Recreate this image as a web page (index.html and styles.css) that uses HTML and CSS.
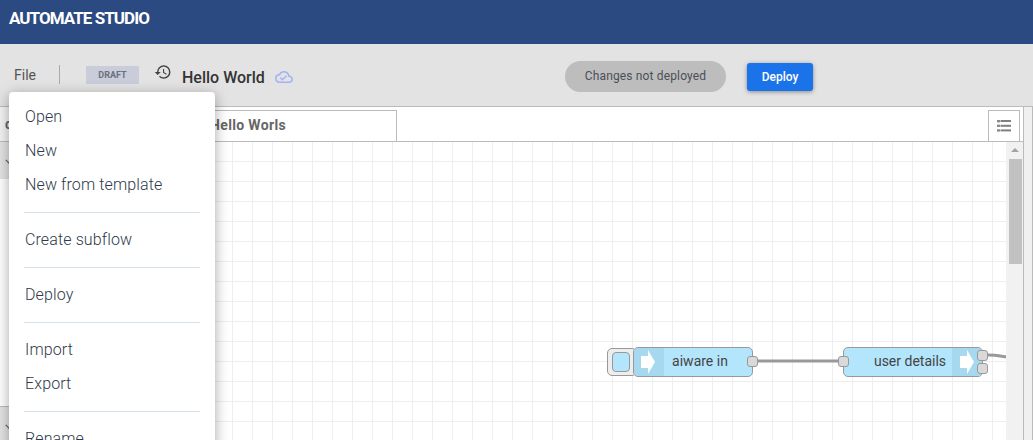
FILE: index.html
```html
<!DOCTYPE html>
<html lang="en">
<head>
<meta charset="utf-8">
<title>Automate Studio</title>
<link rel="stylesheet" href="styles.css">
</head>
<body>
<div class="app">
  <header class="topbar">AUTOMATE STUDIO</header>
  <div class="toolbar">
    <span class="file">File</span>
    <span class="sep"></span>
    <span class="draft">DRAFT</span>
    <svg class="history" viewBox="0 0 24 24"><path d="M13 3a9 9 0 0 0-9 9H1l3.89 3.89.07.14L9 12H6c0-3.87 3.13-7 7-7s7 3.13 7 7-3.13 7-7 7c-1.93 0-3.68-.79-4.94-2.06l-1.42 1.42A8.954 8.954 0 0 0 13 21a9 9 0 0 0 0-18zm-1 5v5l4.28 2.54.72-1.21-3.5-2.08V8H12z"/></svg>
    <span class="flowname">Hello World</span>
    <svg class="cloud" viewBox="0 0 24 24"><path d="M19.35 10.04A7.49 7.49 0 0 0 12 4C9.11 4 6.6 5.64 5.35 8.04A5.994 5.994 0 0 0 0 14c0 3.31 2.69 6 6 6h13c2.76 0 5-2.24 5-5 0-2.64-2.05-4.78-4.65-4.96zM19 18H6c-2.21 0-4-1.79-4-4 0-2.05 1.53-3.76 3.56-3.97l1.07-.11.5-.95A5.469 5.469 0 0 1 12 6c2.62 0 4.88 1.86 5.39 4.43l.3 1.5 1.53.11A2.98 2.98 0 0 1 22 15c0 1.65-1.35 3-3 3zm-9-3.82l-2.09-2.09L6.5 13.5 10 17l6.01-6.01-1.41-1.41z"/></svg>
    <span class="status">Changes not deployed</span>
    <button class="deploy">Deploy</button>
  </div>
  <main class="main">
    <aside class="palette">
      <div class="palette-search">c</div>
      <div class="palette-head"><svg class="chev" viewBox="0 0 10 6"><path d="M1 1l4 4 4-4"/></svg></div>
      <div class="palette-body"></div>
      <div class="palette-foot"><svg class="chev" viewBox="0 0 10 6"><path d="M1 1l4 4 4-4"/></svg></div>
    </aside>
    <section class="workspace">
      <div class="tabbar">
        <div class="tab">Hello Worls</div>
        <button class="tabmenu">
          <svg viewBox="0 0 14 12"><g class="dots"><rect x="0" y="0" width="3" height="2.4"/><rect x="0" y="4.6" width="3" height="2.4"/><rect x="0" y="9.2" width="3" height="2.4"/></g><rect x="3.5" y="0" width="10.5" height="2"/><rect x="3.5" y="4.8" width="10.5" height="2"/><rect x="3.5" y="9.4" width="10.5" height="2"/></svg>
        </button>
      </div>
      <div class="canvas-row">
        <div class="canvas">
          <svg class="wires" width="802" height="298">
            <path d="M553 219H638"/>
            <path d="M783 213C790 213 795 214 802 215"/>
          </svg>
          <div class="inject"><span class="inject-btn"></span></div>
          <div class="node node-in">
            <span class="node-icon"><svg viewBox="0 0 14 24"><path d="M0 6h7V0l7 12-7 12v-6H0z"/></svg></span>
            <span class="node-label">aiware in</span>
            <span class="port port-out"></span>
          </div>
          <div class="node node-user">
            <span class="port port-in"></span>
            <span class="node-label">user details</span>
            <span class="node-icon"><svg viewBox="0 0 14 24"><path d="M0 6h7V0l7 12-7 12v-6H0z"/></svg></span>
            <span class="port port-o1"></span>
            <span class="port port-o2"></span>
          </div>
        </div>
        <div class="scrollbar">
          <span class="scroll-up"></span>
          <span class="scroll-thumb"></span>
        </div>
      </div>
    </section>
    <div class="gutter"></div>
  </main>
  <nav class="menu">
    <a>Open</a>
    <a>New</a>
    <a>New from template</a>
    <hr>
    <a>Create subflow</a>
    <hr>
    <a>Deploy</a>
    <hr>
    <a>Import</a>
    <a>Export</a>
    <hr>
    <a>Rename</a>
  </nav>
</div>
</body>
</html>
```

FILE: styles.css
```css
* { box-sizing: border-box; }
html, body { margin: 0; padding: 0; }
body { font-family: Roboto, "Liberation Sans", sans-serif; background: #e3e3e3; }
.app { position: relative; width: 1033px; height: 440px; overflow: hidden; display: flex; flex-direction: column; }

.topbar { height: 44px; flex: none; background: #2c4a82; color: #fff; font-size: 17px; font-weight: 700; line-height: 36px; padding-left: 9px; letter-spacing: -0.95px; }

.toolbar { height: 62px; flex: none; background: #e3e3e3; display: flex; align-items: center; padding-left: 14px; }
.file { font-size: 14px; color: #555; width: 45px; margin-top: -1px; }
.sep { width: 1px; height: 19px; background: #aaa; margin-right: 26px; margin-top: -1px; }
.draft { width: 53px; height: 18px; background: #c9cdd9; color: #6a7080; font-size: 9px; font-weight: 700; text-align: center; line-height: 18px; margin-right: 15px; margin-top: -1px; }
.history { width: 18px; height: 18px; fill: #444; margin-right: 10px; margin-top: -7px; flex: none; }
.flowname { font-size: 16px; font-weight: 500; color: #333; width: 93px; margin-top: 4px; }
.cloud { width: 18px; height: 18px; fill: #a3b1f5; flex: none; margin-right: 272px; margin-top: 4px; }
.status { width: 161px; height: 31px; border-radius: 16px; background: #bdbdbd; color: #4a4f57; font-size: 12px; letter-spacing: .15px; text-align: center; line-height: 30px; margin-right: 21px; margin-top: 3px; }
.deploy { width: 66px; height: 28px; border: 0; border-radius: 3px; background: #1a73e8; color: #fff; font: 500 12px Roboto, sans-serif; box-shadow: 0 1px 4px rgba(0,0,0,.4); padding: 0; margin-top: 4px; }

.main { flex: 1; min-height: 0; display: flex; border-top: 1px solid #bbb; }
.palette { width: 205px; flex: none; display: flex; flex-direction: column; background: #f3f3f3; }
.palette-search { height: 35px; flex: none; border-bottom: 1px solid #bbb; padding-left: 5px; font-size: 14px; font-weight: 700; color: #666; line-height: 34px; }
.palette-head { height: 37px; flex: none; background: #e3e3e3; padding: 17px 0 0 5px; }
.palette-body { flex: 1; background: #fff; border-bottom: 1px solid #bbb; }
.palette-foot { height: 33px; flex: none; background: #e3e3e3; padding: 17px 0 0 5px; }
.chev { display: block; width: 8px; height: 5px; fill: none; stroke: #666; stroke-width: 1.6; }

.workspace { width: 819px; flex: none; display: flex; flex-direction: column; background: #fff; border-right: 1px solid #bbb; }
.tabbar { height: 35px; flex: none; display: flex; justify-content: space-between; border-bottom: 1px solid #bbb; padding-top: 3px; }
.tab { width: 192px; border: 1px solid #bbb; border-left: 0; border-bottom: 0; background: #fff; padding-left: 5px; font-size: 14px; font-weight: 700; letter-spacing: .35px; color: #666; line-height: 29px; }
.tabmenu { width: 32px; border: 1px solid #bbb; border-bottom: 0; background: #fff; margin-right: 3px; padding: 0; display: flex; align-items: center; justify-content: center; }
.tabmenu svg { width: 14px; height: 12px; fill: #808080; }
.tabmenu .dots { fill: #8c8c8c; }

.canvas-row { flex: 1; min-height: 0; display: flex; }
.canvas { position: relative; flex: 1; overflow: hidden; background-color: #fff;
  background-image: linear-gradient(#eee 1px, transparent 1px), linear-gradient(90deg, #eee 1px, transparent 1px);
  background-size: 20px 20px; background-position: 7px 19px; }
.wires { position: absolute; left: 0; top: 0; fill: none; stroke: #999; stroke-width: 3; }

.inject { position: absolute; left: 402px; top: 206px; width: 30px; height: 28px; background: #eee; border: 1px solid #999; border-radius: 5px; padding: 3px 0 0 4px; }
.inject-btn { display: block; width: 18px; height: 20px; background: #b3e5fc; border: 1px solid #999; border-radius: 4px; }
.node { position: absolute; top: 205px; height: 30px; background: #b3e5fc; border: 1px solid #999; border-radius: 5px; display: flex; align-items: stretch; font-size: 14px; color: #444; }
.node-in { left: 428px; width: 120px; }
.node-user { left: 638px; width: 140px; }
.node-icon { width: 30px; flex: none; background: #a6d8f0; display: flex; align-items: center; justify-content: center; }
.node-in .node-icon { border-radius: 4px 0 0 4px; padding-right: 2px; }
.node-user .node-icon { border-radius: 0 4px 4px 0; }
.node-icon svg { width: 14px; height: 24px; fill: #fff; }
.node-label { flex: 1; text-align: center; line-height: 27px; }
.node-in .node-label { padding-right: 16px; }
.node-user .node-label { padding-left: 24px; }
.port { position: absolute; width: 11px; height: 11px; background: #d9d9d9; border: 1px solid #999; border-radius: 3px; }
.port-out { right: -6px; top: 8px; }
.port-in { left: -6px; top: 8px; }
.port-o1 { right: -6px; top: 2px; }
.port-o2 { right: -6px; top: 15px; }

.scrollbar { width: 17px; flex: none; background: #f1f1f1; display: flex; flex-direction: column; align-items: center; padding-left: 1px; }
.scroll-up { margin-top: 6px; width: 0; height: 0; border-left: 4px solid transparent; border-right: 4px solid transparent; border-bottom: 4px solid #a3a3a3; }
.scroll-thumb { margin-top: 7px; width: 13px; height: 105px; background: #c1c1c1; }

.gutter { flex: 1; background: #f0f0f0; border-right: 1px solid #bbb; }

.menu { position: absolute; left: 9px; top: 92px; width: 206px; height: 360px; padding: 7px 15px 0 15px; background: #fff; border-radius: 4px; box-shadow: 0 3px 14px rgba(0,0,0,.35); }
.menu a { display: block; height: 34px; line-height: 36px; padding-left: 1px; font-size: 16px; font-weight: 300; letter-spacing: .12px; color: #2e3a4a; }
.menu hr { height: 1px; border: 0; background: #d5dfe9; margin: 11px 0 9px 0; }
```
